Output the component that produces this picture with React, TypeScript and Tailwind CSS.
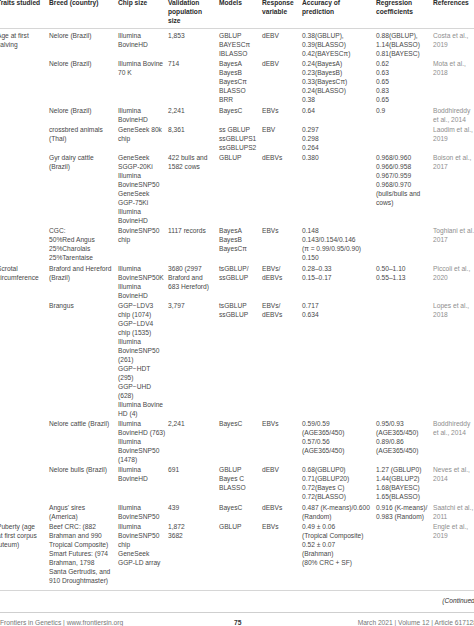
import React from "react";

type Row = {
  trait?: string[];
  breed?: string[];
  chip?: string[];
  size?: string[];
  models?: string[];
  resp?: string[];
  acc?: string[];
  reg?: string[];
  refs?: string[];
};

const rows: Row[] = [
  {
    trait: ["Age at first", "calving"],
    breed: ["Nelore (Brazil)"],
    chip: ["Illumina", "BovineHD"],
    size: ["1,853"],
    models: ["GBLUP", "BAYESCπ", "IBLASSO"],
    resp: ["dEBV"],
    acc: ["0.38(GBLUP),", "0.39(BLASSO)", "0.42(BAYESCπ)"],
    reg: ["0.88(GBLUP),", "1.14(BLASSO)", "0.81(BAYESC)"],
    refs: ["Costa et al.,", "2019"],
  },
  {
    breed: ["Nelore (Brazil)"],
    chip: ["Illumina Bovine", "70 K"],
    size: ["714"],
    models: ["BayesA", "BayesB", "BayesCπ", "BLASSO", "BRR"],
    resp: ["dEBV"],
    acc: ["0.24(BayesA)", "0.23(BayesB)", "0.33(BayesCπ)", "0.24(BLASSO)", "0.38"],
    reg: ["0.62", "0.63", "0.65", "0.83", "0.65"],
    refs: ["Mota et al.,", "2018"],
  },
  {
    breed: ["Nelore (Brazil)"],
    chip: ["Illumina", "BovineHD"],
    size: ["2,241"],
    models: ["BayesC"],
    resp: ["EBVs"],
    acc: ["0.64"],
    reg: ["0.9"],
    refs: ["Boddhireddy", "et al., 2014"],
  },
  {
    breed: ["crossbred animals", "(Thai)"],
    chip: ["GeneSeek 80k", "chip"],
    size: ["8,361"],
    models: ["ss GBLUP", "ssGBLUPS1", "ssGBLUPS2"],
    resp: ["EBV"],
    acc: ["0.297", "0.298", "0.264"],
    refs: ["Laodim et al.,", "2019"],
  },
  {
    breed: ["Gyr dairy cattle", "(Brazil)"],
    chip: ["GeneSeek", "SGGP-20Ki", "Illumina", "BovineSNP50", "GeneSeek", "GGP-75Ki", "Illumina", "BovineHD"],
    size: ["422 bulls and", "1582 cows"],
    models: ["GBLUP"],
    resp: ["dEBVs"],
    acc: ["0.380"],
    reg: ["0.968/0.960", "0.966/0.958", "0.967/0.959", "0.968/0.970", "(bulls/bulls and", "cows)"],
    refs: ["Boison et al.,", "2017"],
  },
  {
    breed: ["CGC:", "50%Red Angus", "25%Charolais", "25%Tarentaise"],
    chip: ["BovineSNP50", "chip"],
    size: ["1117 records"],
    models: ["BayesA", "BayesB", "BayesCπ"],
    resp: ["EBVs"],
    acc: ["0.148", "0.143/0.154/0.146", "(π = 0.99/0.95/0.90)", "0.150"],
    refs: ["Toghiani et al.,", "2017"],
  },
  {
    trait: ["Scrotal", "circumference"],
    breed: ["Braford and Hereford", "(Brazil)"],
    chip: ["Illumina", "BovineSNP50K", "Illumina", "BovineHD"],
    size: ["3680 (2997", "Braford and", "683 Hereford)"],
    models: ["tsGBLUP/", "ssGBLUP"],
    resp: ["EBVs/", "dEBVs"],
    acc: ["0.28–0.33", "0.15–0.17"],
    reg: ["0.50–1.10", "0.55–1.13"],
    refs: ["Piccoli et al.,", "2020"],
  },
  {
    breed: ["Brangus"],
    chip: [
      "GGP−LDV3",
      "chip (1074)",
      "GGP−LDV4",
      "chip (1535)",
      "Illumina",
      "BovineSNP50",
      "(261)",
      "GGP−HDT",
      "(295)",
      "GGP−UHD",
      "(628)",
      "Illumina Bovine",
      "HD (4)",
    ],
    size: ["3,797"],
    models: ["tsGBLUP", "ssGBLUP"],
    resp: ["EBVs/", "dEBVs"],
    acc: ["0.717", "0.634"],
    refs: ["Lopes et al.,", "2018"],
  },
  {
    breed: ["Nelore cattle (Brazil)"],
    chip: ["Illumina", "BovineHD (763)", "Illumina", "BovineSNP50", "(1478)"],
    size: ["2,241"],
    models: ["BayesC"],
    resp: ["EBVs"],
    acc: ["0.59/0.59", "(AGE365/450)", "0.57/0.56", "(AGE365/450)"],
    reg: ["0.95/0.93", "(AGE365/450)", "0.89/0.86", "(AGE365/450)"],
    refs: ["Boddhireddy", "et al., 2014"],
  },
  {
    breed: ["Nelore bulls (Brazil)"],
    chip: ["Illumina", "BovineHD"],
    size: ["691"],
    models: ["GBLUP", "Bayes C", "BLASSO"],
    resp: ["dEBV"],
    acc: ["0.68(GBLUP0)", "0.71(GBLUP20)", "0.72(Bayes C)", "0.72(BLASSO)"],
    reg: ["1.27 (GBLUP0)", "1.44(GBLUP2)", "1.68(BAYESC)", "1.65(BLASSO)"],
    refs: ["Neves et al.,", "2014"],
  },
  {
    breed: ["Angus' sires", "(America)"],
    chip: ["Illumina", "BovineSNP50"],
    size: ["439"],
    models: ["BayesC"],
    resp: ["dEBVs"],
    acc: ["0.487 (K-means)/0.600", "(Random)"],
    reg: ["0.916 (K-means)/", "0.983 (Random)"],
    refs: ["Saatchi et al.,", "2011"],
  },
  {
    trait: ["Puberty (age", "at first corpus", "luteum)"],
    breed: [
      "Beef CRC: (882",
      "Brahman and 990",
      "Tropical Composite)",
      "Smart Futures: (974",
      "Brahman, 1798",
      "Santa Gertrudis, and",
      "910 Droughtmaster)",
    ],
    chip: ["Illumina", "BovineSNP50", "chip", "GeneSeek", "GGP-LD array"],
    size: ["1,872", "3682"],
    models: ["GBLUP"],
    resp: ["EBVs"],
    acc: ["0.49 ± 0.06", "(Tropical Composite)", "0.52 ± 0.07", "(Brahman)", "(80% CRC + SF)"],
    refs: ["Engle et al.,", "2019"],
  },
];

const cols = "grid grid-cols-[52px_69px_50px_51px_43px_40px_74px_57px_60px]";

const Cell = ({ lines, className = "" }: { lines?: string[]; className?: string }) => (
  <div className={`whitespace-nowrap ${className}`}>
    {(lines || []).map((l, i) => (
      <div key={i}>{l}</div>
    ))}
  </div>
);

export default function App() {
  return (
    <div
      className="w-[474px] h-[626px] overflow-hidden bg-white text-[#474747] text-[6.65px] leading-[9px]"
      style={{ fontFamily: '"Liberation Sans", Arial, sans-serif' }}
    >
      <div className="ml-[-3px] mt-[-2px]">
        {/* header */}
        <div className={`${cols} font-bold text-[#2a2a2a] pb-[3px] border-b border-[#d6d6d6]`}>
          <Cell lines={["Traits studied"]} />
          <Cell lines={["Breed (country)"]} />
          <Cell lines={["Chip size"]} />
          <Cell lines={["Validation", "population", "size"]} />
          <Cell lines={["Models"]} />
          <Cell lines={["Response", "variable"]} />
          <Cell lines={["Accuracy of", "prediction"]} />
          <Cell lines={["Regression", "coefficients"]} />
          <Cell lines={["References"]} />
        </div>

        <div className="pt-[2px] pb-[4px] border-b border-[#d6d6d6]">
          {rows.map((r, i) => (
            <div key={i} className={`${cols} pb-[1.25px]`}>
              <Cell lines={r.trait} />
              <Cell lines={r.breed} />
              <Cell lines={r.chip} />
              <Cell lines={r.size} />
              <Cell lines={r.models} />
              <Cell lines={r.resp} />
              <Cell lines={r.acc} />
              <Cell lines={r.reg} />
              <Cell lines={r.refs} className="text-[#8e8e8e]" />
            </div>
          ))}
        </div>
      </div>

      <div className="flex justify-end pt-[5px] mr-[-3px] italic text-[#333]">(Continued)</div>

      <div className="mt-[7px] border-t border-[#cfcfcf] flex items-center pt-[5px] text-[#777] mr-[-3px]">
        <span className="w-[234px]">Frontiers in Genetics | www.frontiersin.org</span>
        <span className="font-bold text-[#333]">75</span>
        <span className="ml-auto">March 2021 | Volume 12 | Article 617128</span>
      </div>
    </div>
  );
}
